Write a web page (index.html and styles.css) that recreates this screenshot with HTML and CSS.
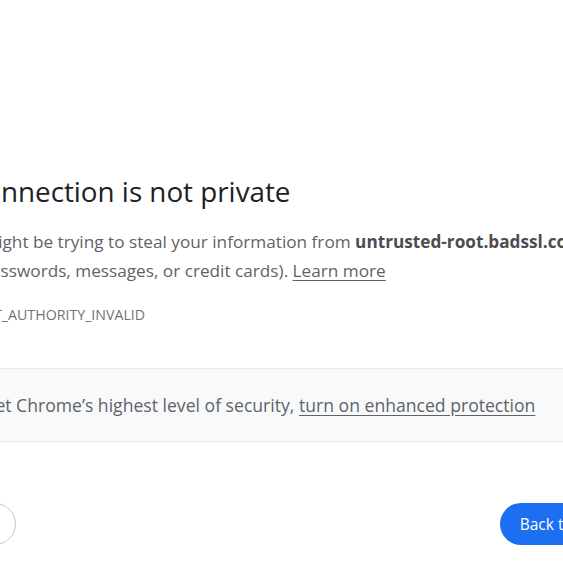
FILE: index.html
```html
<!DOCTYPE html>
<html lang="en">
<head>
<meta charset="utf-8">
<title>Privacy error</title>
<link rel="stylesheet" href="styles.css">
</head>
<body>
<div class="interstitial-wrapper">
  <h1 class="heading">Your connection is not private</h1>
  <p class="explanation">Attackers might be trying to steal your information from <strong>untrusted-root.badssl.com</strong> (for<br>example, passwords, messages, or credit cards). <a href="#" class="link">Learn more</a></p>
  <div class="error-code">NET::ERR_CERT_AUTHORITY_INVALID</div>
  <div class="enhanced-protection">To get Chrome’s highest level of security, <a href="#" class="link">turn on enhanced protection</a></div>
  <div class="nav-wrapper">
    <button class="btn btn-secondary">Advanced</button>
    <button class="btn btn-primary">Back to safety</button>
  </div>
</div>
</body>
</html>
```

FILE: styles.css
```css
html, body {
  margin: 0;
  padding: 0;
  overflow: hidden;
  background: #ffffff;
}

body {
  font-family: "Open Sans", "Noto Sans", sans-serif;
  color: #5f6368;
}

.interstitial-wrapper {
  margin-left: -97px;
  width: 737px;
  padding-top: 173px;
}

.heading {
  margin: 0;
  font-size: 27.8px;
  line-height: 36px;
  font-weight: 400;
  color: #202124;
  white-space: nowrap;
}

.explanation {
  margin: 19px 0 0;
  font-size: 17.2px;
  line-height: 28.8px;
  white-space: nowrap;
}

.explanation strong {
  font-weight: 700;
  color: #4a4d51;
}

.link {
  color: #5f6368;
  text-decoration: underline;
  text-underline-offset: 3px;
}

.error-code {
  margin-top: 18px;
  font-size: 14.2px;
  line-height: 22px;
  color: #6f7377;
  white-space: nowrap;
}

.enhanced-protection {
  margin-top: 42px;
  width: 900px;
  box-sizing: border-box;
  padding: 22px 24px 22px 58px;
  background: #f8f9fa;
  border-top: 1px solid #e6e8eb;
  border-bottom: 1px solid #e6e8eb;
  border-radius: 20px;
  font-size: 17.6px;
  line-height: 28.8px;
  white-space: nowrap;
}

.nav-wrapper {
  margin-top: 61px;
  display: flex;
  justify-content: space-between;
}

.btn {
  height: 42px;
  border-radius: 21px;
  padding: 0 20px;
  font-family: "Open Sans", "Noto Sans", sans-serif;
  font-size: 15.5px;
  white-space: nowrap;
  cursor: pointer;
}

.btn-secondary {
  width: 113px;
  background: #ffffff;
  border: 1.5px solid #c6c9cc;
  color: #1a73e8;
}

.btn-primary {
  background: #1c6ff0;
  border: none;
  color: #ffffff;
}
```
